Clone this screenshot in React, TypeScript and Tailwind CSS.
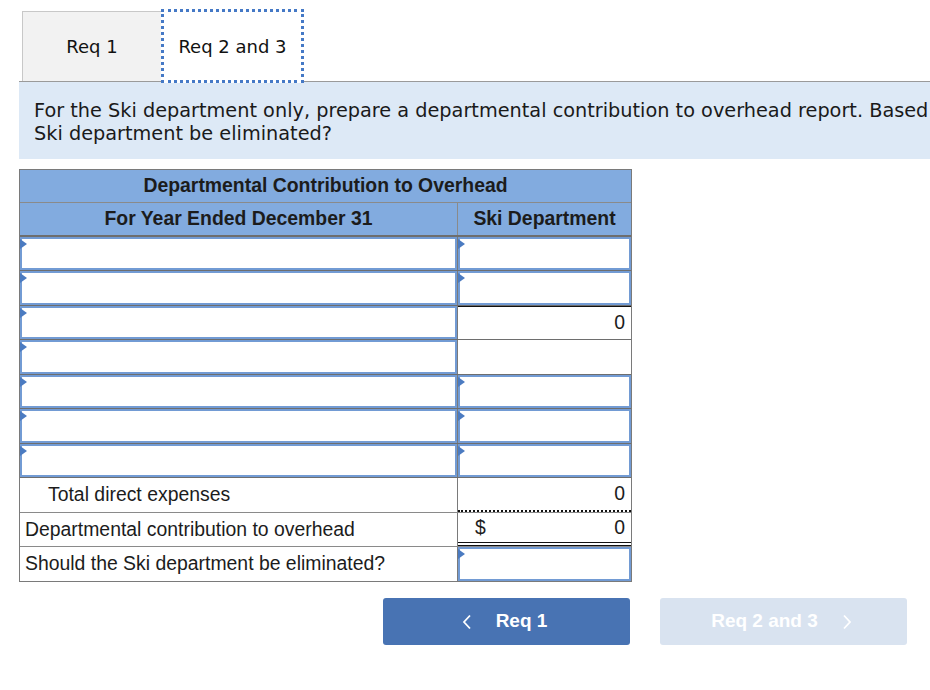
import React from "react";

const Tri = () => (
  <div className="absolute top-[2px] left-0 w-0 h-0 border-y-[5px] border-y-transparent border-l-[7px] border-l-[#4b7bc1]" />
);

const InputCell = ({ tri = true }: { tri?: boolean }) => (
  <div className="relative h-full w-full">
    <div className="h-full w-full border-2 border-[#729bd4] bg-white" />
    {tri && <Tri />}
  </div>
);

type Kind = "input" | "zeroTop" | "empty";

const rows: { right: Kind; h: string }[] = [
  { right: "input", h: "h-[34px]" },
  { right: "input", h: "h-[35px]" },
  { right: "zeroTop", h: "h-[34px]" },
  { right: "empty", h: "h-[35px]" },
  { right: "input", h: "h-[34px]" },
  { right: "input", h: "h-[35px]" },
  { right: "input", h: "h-[34px]" },
];

export default function App() {
  return (
    <div className="w-[930px] h-[690px] bg-white overflow-hidden">
      {/* Tabs */}
      <div className="relative h-[82px] pt-[9px]">
        <div className="flex items-start ml-[22px]">
          <div
            className="mt-[2px] w-[139px] h-[70px] bg-[#f2f2f2] border-l border-t border-[#c8c8c8] flex items-center justify-center text-[18px] text-[#111]"
            style={{ fontFamily: '"DejaVu Sans", Verdana, sans-serif' }}
          >
            Req 1
          </div>
          <div
            className="relative z-10 w-[143px] h-[74px] bg-white border-[3px] border-dotted border-[#4579c6] flex items-center justify-center text-[18px] text-[#111]"
            style={{ fontFamily: '"DejaVu Sans", Verdana, sans-serif' }}
          >
            Req 2 and 3
          </div>
        </div>
        <div className="absolute left-[19px] right-0 top-[81px] h-px bg-[#9a9a9a]" />
      </div>

      {/* Instruction */}
      <div
        className="ml-[19px] h-[77px] bg-[#dde9f6] pl-[15px] pt-[17px] text-[19.3px] leading-[23px] text-[#1a1a1a] overflow-hidden"
        style={{ fontFamily: '"DejaVu Sans", Verdana, sans-serif' }}
      >
        <div className="whitespace-nowrap">
          For the Ski department only, prepare a departmental contribution to overhead report. Based on the departmental contribution to overhead, should the
        </div>
        <div className="whitespace-nowrap">Ski department be eliminated?</div>
      </div>

      {/* Table */}
      <div
        className="ml-[19px] mt-[10px] w-[613px] border border-[#7a7a7a] text-[19.4px] text-[#1c1c1c]"
        style={{ fontFamily: '"Liberation Sans", Arial, sans-serif' }}
      >
        <div className="h-[33px] bg-[#82abdf] border-b border-[#8a8a8a] flex items-center justify-center font-bold">
          Departmental Contribution to Overhead
        </div>
        <div className="h-[34px] bg-[#82abdf] border-b-2 border-[#6e6e6e] flex font-bold">
          <div className="w-[438px] border-r border-[#8a8a8a] flex items-center justify-center">
            For Year Ended December 31
          </div>
          <div className="flex-1 flex items-center justify-center">Ski Department</div>
        </div>

        {rows.map((r, i) => (
          <div key={i} className={`${r.h} flex border-b border-[#6e6e6e]`}>
            <div className="w-[438px] border-r border-[#7a7a7a]">
              <InputCell />
            </div>
            <div className="flex-1">
              {r.right === "input" && <InputCell />}
              {r.right === "zeroTop" && (
                <div className="h-full border-t border-[#111] flex items-center justify-end pr-[6px]">0</div>
              )}
              {r.right === "empty" && <div className="h-full" />}
            </div>
          </div>
        ))}

        <div className="h-[35px] flex border-b border-[#8a8a8a]">
          <div className="w-[438px] border-r border-[#7a7a7a] flex items-center pl-[28px]">
            Total direct expenses
          </div>
          <div className="flex-1 flex items-center justify-end pr-[6px] border-b-2 border-dotted border-[#111]">0</div>
        </div>
        <div className="h-[34px] flex border-b border-[#8a8a8a]">
          <div className="w-[438px] border-r border-[#7a7a7a] flex items-center pl-[5px]">
            Departmental contribution to overhead
          </div>
          <div className="flex-1 flex items-center justify-between pl-[17px] pr-[6px] border-b-[4px] border-double border-[#111]">
            <span>$</span>
            <span>0</span>
          </div>
        </div>
        <div className="h-[34px] flex">
          <div className="w-[438px] border-r border-[#7a7a7a] flex items-center pl-[5px]">
            Should the Ski department be eliminated?
          </div>
          <div className="flex-1">
            <InputCell />
          </div>
        </div>
      </div>

      {/* Nav buttons */}
      <div
        className="flex ml-[383px] mt-[16px] gap-[30px] text-[19px] font-bold"
        style={{ fontFamily: '"Liberation Sans", Arial, sans-serif' }}
      >
        <div className="w-[247px] h-[47px] rounded-[3px] bg-[#4873b3] text-white flex items-center justify-center gap-[24px] pr-[4px]">
          <svg width="10" height="16" viewBox="0 0 10 16" fill="none">
            <path d="M8 1.5 L2 8 L8 14.5" stroke="white" strokeWidth="1.8" />
          </svg>
          <span>Req 1</span>
        </div>
        <div className="w-[247px] h-[47px] rounded-[3px] bg-[#d9e3f0] text-white flex items-center justify-center gap-[24px] pr-[4px]">
          <span>Req 2 and 3</span>
          <svg width="10" height="16" viewBox="0 0 10 16" fill="none">
            <path d="M2 1.5 L8 8 L2 14.5" stroke="white" strokeWidth="1.8" />
          </svg>
        </div>
      </div>
    </div>
  );
}
